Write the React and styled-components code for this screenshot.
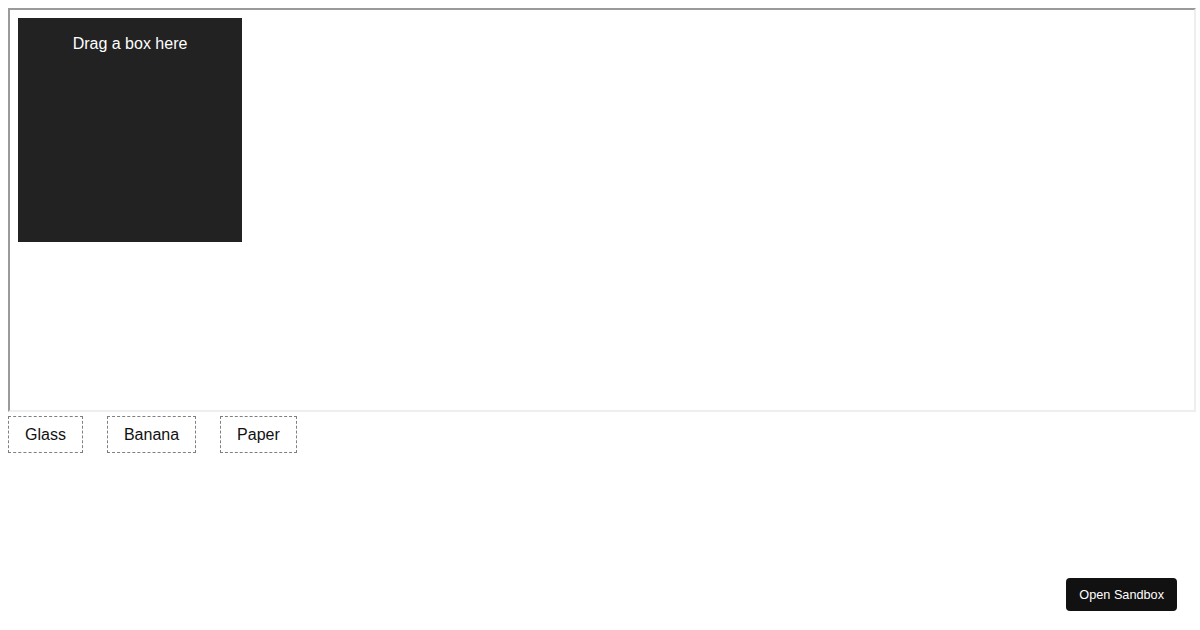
import React from "react";
import styled, { createGlobalStyle } from "styled-components";

const Global = createGlobalStyle`
  html, body { background: #fff; overflow: hidden; }
  body {
    margin: 8px 0 8px 8px;
    font-family: "Liberation Sans", Arial, Helvetica, sans-serif;
    font-size: 16px;
    color: #111;
  }
`;

const Frame = styled.div`
  box-sizing: border-box;
  width: 1188px;
  height: 404px;
  padding: 8px;
  border-style: solid;
  border-width: 2px;
  border-color: #9a9a9a #eeeeee #eeeeee #9a9a9a;
`;

const Dustbin = styled.div`
  width: 192px;
  height: 192px;
  padding: 16px;
  background: #222;
  color: #fff;
  text-align: center;
  font-size: 16px;
  line-height: 20px;
`;

const BoxRow = styled.div`
  display: flex;
  gap: 24px;
  margin-top: 4px;
`;

const Box = styled.div`
  border: 1px dashed gray;
  padding: 8px 16px;
  background: #fff;
  color: #111;
  cursor: move;
  line-height: 19px;
`;

const SandboxButton = styled.button`
  position: fixed;
  right: 23px;
  bottom: 19px;
  height: 33px;
  padding: 0 13px;
  background: #111;
  color: #fff;
  border: none;
  border-radius: 4px;
  font-family: "Liberation Sans", Arial, sans-serif;
  font-size: 12.7px;
  cursor: pointer;
`;

export default function App() {
  return (
    <>
      <Global />
      <Frame>
        <Dustbin>Drag a box here</Dustbin>
      </Frame>
      <BoxRow>
        {["Glass", "Banana", "Paper"].map((n) => (
          <Box key={n}>{n}</Box>
        ))}
      </BoxRow>
      <SandboxButton>Open Sandbox</SandboxButton>
    </>
  );
}
